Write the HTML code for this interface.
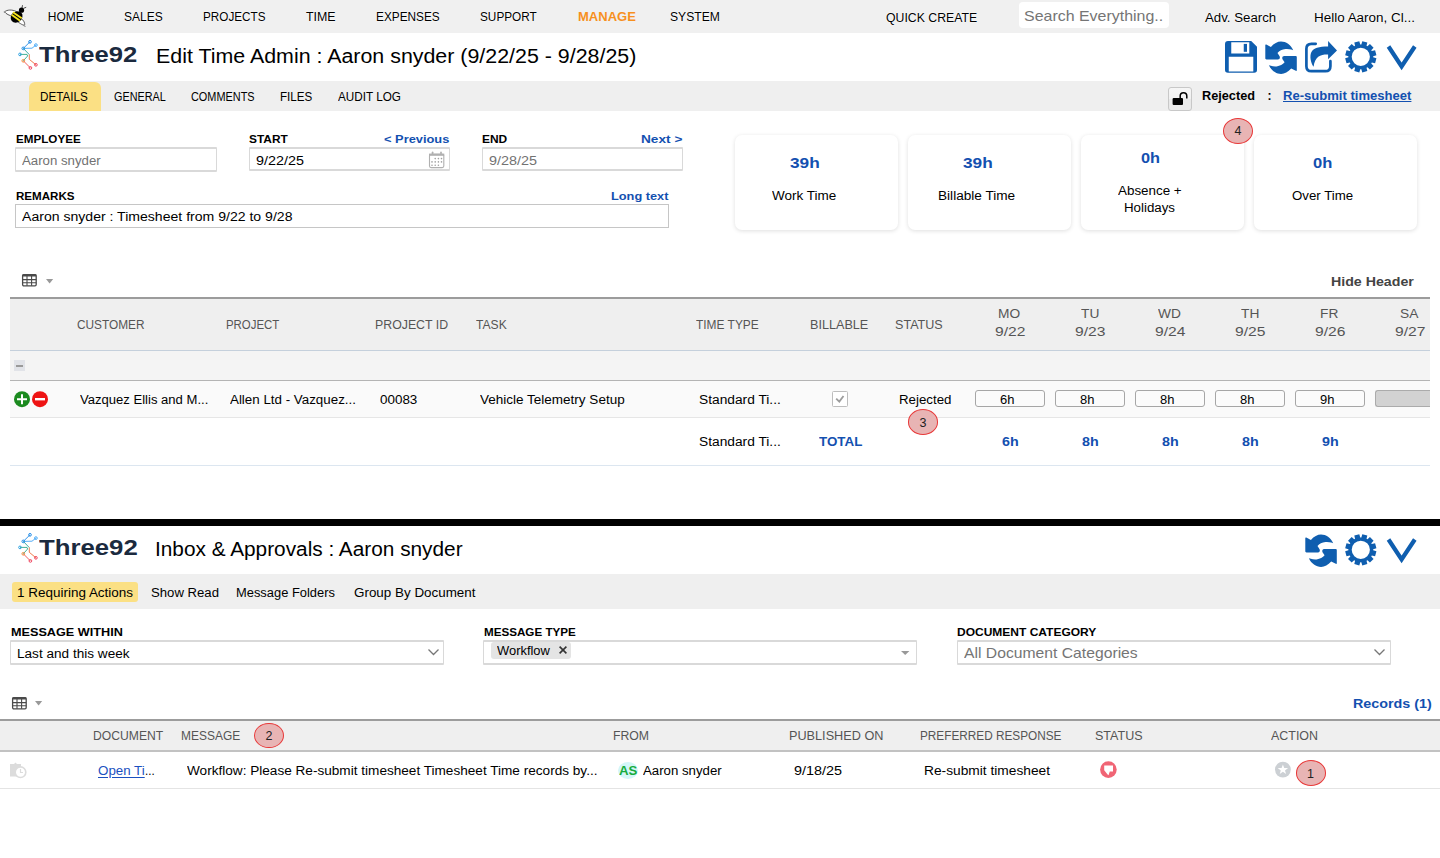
<!DOCTYPE html>
<html><head><meta charset="utf-8"><style>
html,body{margin:0;padding:0;}
body{width:1440px;height:858px;position:relative;overflow:hidden;background:#fff;font-family:"Liberation Sans", sans-serif;}
.t{position:absolute;white-space:pre;transform-origin:0 0;}
.b{position:absolute;box-sizing:border-box;}
svg{position:absolute;overflow:visible;}
</style></head><body>
<svg width="0" height="0" style="position:absolute">
<defs>
<path id="gear" fill-rule="evenodd" d="M11.00,-5.73 L14.29,-6.51 L15.63,-1.50 L12.39,-0.54 L12.39,0.54 L15.63,1.50 L14.29,6.51 L11.00,5.73 L10.46,6.66 L12.78,9.12 L9.12,12.78 L6.66,10.46 L5.73,11.00 L6.51,14.29 L1.50,15.63 L0.54,12.39 L-0.54,12.39 L-1.50,15.63 L-6.51,14.29 L-5.73,11.00 L-6.66,10.46 L-9.12,12.78 L-12.78,9.12 L-10.46,6.66 L-11.00,5.73 L-14.29,6.51 L-15.63,1.50 L-12.39,0.54 L-12.39,-0.54 L-15.63,-1.50 L-14.29,-6.51 L-11.00,-5.73 L-10.46,-6.66 L-12.78,-9.12 L-9.12,-12.78 L-6.66,-10.46 L-5.73,-11.00 L-6.51,-14.29 L-1.50,-15.63 L-0.54,-12.39 L0.54,-12.39 L1.50,-15.63 L6.51,-14.29 L5.73,-11.00 L6.66,-10.46 L9.12,-12.78 L12.78,-9.12 L10.46,-6.66 Z M9.1,0 A9.1,9.1 0 1,0 -9.1,0 A9.1,9.1 0 1,0 9.1,0 Z"/>
<g id="logo" fill="none" stroke-width="0.9">
  <path d="M23.3,48.4 L30,41.8" stroke="#1e88e5"/>
  <path d="M23.3,48.4 L32,48.2 L35.9,45.1" stroke="#42a5f5"/>
  <path d="M23.3,48.4 L29.3,54.6" stroke="#26a69a"/>
  <path d="M20,54.4 L27,54.4 L27.6,56 L23.3,60.8" stroke="#2eaa8a"/>
  <path d="M29.3,54.6 L29.3,59.3 L35.9,64.8" stroke="#ef6c3a"/>
  <path d="M23.3,60.8 L30.4,67.9" stroke="#ee4d4d"/>
  <circle cx="30" cy="41.8" r="1.35" stroke="#1e88e5" stroke-width="0.95"/>
  <circle cx="35.9" cy="45.1" r="1.35" stroke="#42a5f5" stroke-width="0.95"/>
  <circle cx="23.3" cy="48.4" r="1.35" stroke="#1e88e5" stroke-width="0.95"/>
  <circle cx="20" cy="54.4" r="1.35" stroke="#29a0e0" stroke-width="0.95"/>
  <circle cx="23.3" cy="60.8" r="1.35" stroke="#f08a3a" stroke-width="0.95"/>
  <circle cx="35.9" cy="64.8" r="1.35" stroke="#ee3e5a" stroke-width="0.95"/>
  <circle cx="30.4" cy="67.9" r="1.35" stroke="#ee3e5a" stroke-width="0.95"/>
</g>
<g id="refresh">
  <path id="rtop" d="M3.3,7.2 Q3.3,6.2 4.3,6.6 L8.9,8.9 C12,5.5 15.5,3.5 19,3.5 C24,3.5 28.8,6.8 31.2,12.2 L29.2,11.6 C27.5,11 25.5,10.8 23.5,11 C20,11.4 17.3,12.8 15.5,15.1 L17.6,18.2 C18.3,19.8 17.6,21.4 15.8,21.4 L4.5,21.4 C3.8,21.4 3.3,20.9 3.3,20.2 Z"/>
  <use href="#rtop" transform="rotate(180 19.05 19.7)"/>
</g>
<path id="chev" d="M2.5,2.5 L15.6,22.5 L28.8,2.5" fill="none" stroke-width="4.2" stroke-linejoin="miter"/>
<g id="gridico">
  <rect x="0.6" y="0.6" width="13.6" height="11.2" rx="1.2" fill="none" stroke="#4a4a4a" stroke-width="1.3"/>
  <rect x="0.6" y="0.3" width="13.6" height="2.2" fill="#4a4a4a"/>
  <path d="M0.6,5.6 H14.2 M0.6,8.8 H14.2 M5,1 V11.8 M9.6,1 V11.8" stroke="#4a4a4a" stroke-width="1.1"/>
</g>
<g id="chevsm"><path d="M0.5,0.5 L5.5,5.5 L10.5,0.5" fill="none" stroke="#777" stroke-width="1.3"/></g>
</defs>
</svg>

<!-- ===== top nav ===== -->
<div class="b" style="left:0;top:0;width:1440px;height:33px;background:#f0f0f0"></div>
<svg style="left:0;top:0" width="32" height="32">
    <path d="M4.6,11.9 C7,9.6 12,9.4 16.5,11.5 L13,16.5 C9.5,15.5 6,14 4.6,11.9 Z" fill="#fff" stroke="#333" stroke-width="0.8"/>
    <path d="M19,19 C22,18 24.5,21 24.8,24.6 C24,25.6 22,25 17.5,21.5 Z" fill="#fff" stroke="#333" stroke-width="0.8"/>
    <ellipse cx="16.6" cy="16.9" rx="6.3" ry="5.3" transform="rotate(-40 16.6 16.9)" fill="#000"/>
    <path d="M12.9,12.3 L21.7,18.3" stroke="#f6e41a" stroke-width="1.9"/>
    <path d="M11.7,14.8 L20,20.8" stroke="#f6e41a" stroke-width="1.9"/>
    <circle cx="21.5" cy="10.2" r="2.6" fill="#000"/>
    <path d="M22,8 L22.5,5.2 M23.4,8.4 L26.2,7.3" stroke="#222" stroke-width="0.8"/>
    <path d="M23.5,25.6 L25.5,26.4" stroke="#555" stroke-width="0.8"/>
    <circle cx="4.5" cy="12" r="0.8" fill="#888"/>
</svg>
<div class="b" style="left:1019px;top:2px;width:150px;height:25.5px;background:#fff;border-radius:4px"></div>

<!-- ===== header 1 ===== -->
<svg style="left:0;top:0" width="40" height="80"><use href="#logo"/></svg>
<svg style="left:1225px;top:41px" width="32" height="32" viewBox="0 0 32 32">
  <path fill="#0f5eaf" fill-rule="evenodd" d="M3,0 H26.2 L32,5.8 V29 Q32,31.8 29.2,31.8 H3 Q0,31.8 0,29 V3 Q0,0 3,0 Z M6.25,1.3 V12.5 H24.3 V1.3 Z M3.75,15.8 V30.6 H28.3 V15.8 Z"/>
  <rect x="18.75" y="2.9" width="3.25" height="7.9" fill="#0f5eaf"/>
</svg>
<svg style="left:1262px;top:38px" width="38" height="38" fill="#0f5eaf"><use href="#refresh"/></svg>
<svg style="left:1302px;top:38px" width="38" height="38">
  <path d="M13.7,5.8 L9.4,5.8 Q4.4,5.8 4.4,10.8 L4.4,28.2 Q4.4,33.2 9.4,33.2 L23.4,33.2 Q28.4,33.2 28.4,28.2 L28.4,23.2" fill="none" stroke="#0f5eaf" stroke-width="2.7" stroke-linecap="round"/>
  <path d="M26.1,3.1 L35,12.4 L26.1,21.3 L26.1,16.4 C19,16.2 12.8,18 11.6,28.8 C8.5,24.5 7.6,18 9.3,14.2 C11.5,9.8 17,8.4 26.1,8.4 Z" fill="#0f5eaf"/>
</svg>
<svg style="left:1342px;top:38px" width="38" height="38" fill="#0f5eaf"><use href="#gear" transform="translate(18.8,18.8)"/></svg>
<svg style="left:1385.5px;top:44px" width="32" height="26" stroke="#0f5eaf"><use href="#chev"/></svg>

<!-- ===== tabs 1 ===== -->
<div class="b" style="left:0;top:81px;width:1440px;height:30px;background:#efefef"></div>
<div class="b" style="left:29px;top:82px;width:71.5px;height:29px;background:#fbe084;border-radius:6px 6px 0 0"></div>
<div class="b" style="left:1168px;top:87px;width:24px;height:23.5px;border:1px solid #c8c8c8;border-radius:3px;background:linear-gradient(#f6f6f6 0%,#f1f1f1 50%,#e9e9e9 51%,#e9e9e9 100%)"></div>
<svg style="left:1164px;top:84px" width="32" height="30">
  <rect x="8.6" y="14" width="10.4" height="7" rx="1" fill="#000"/>
  <path d="M16.2,14.2 V12 A3.3,3.3 0 0 1 22.8,12 V14.6" fill="none" stroke="#000" stroke-width="1.5"/>
</svg>

<!-- ===== form ===== -->
<div class="b" style="left:15px;top:147px;width:201.5px;height:24.5px;border-style:solid;border-color:#d9d9d9;border-width:2px 1px;border-radius:1px;background:#fff"></div>
<div class="b" style="left:248.5px;top:147.3px;width:201px;height:24px;border-style:solid;border-color:#d9d9d9;border-width:2px 1px;border-radius:1px;background:#fff"></div>
<div class="b" style="left:481.8px;top:147.3px;width:201px;height:24px;border-style:solid;border-color:#d9d9d9;border-width:2px 1px;border-radius:1px;background:#fff"></div>
<div class="b" style="left:15px;top:204px;width:654px;height:24px;border:1px solid #c6c6c6;background:#fff"></div>
<svg style="left:424px;top:148px" width="26" height="24">
  <rect x="5.5" y="6.2" width="14.3" height="13.4" rx="1.6" fill="none" stroke="#b0b0b0" stroke-width="1.1"/>
  <rect x="5" y="5.6" width="15.3" height="2.2" fill="#b0b0b0"/>
  <rect x="7.8" y="3.5" width="1.6" height="3" rx="0.8" fill="#b0b0b0"/>
  <rect x="16.2" y="3.5" width="1.6" height="3" rx="0.8" fill="#b0b0b0"/>
  <g fill="#a0a0a0">
    <circle cx="11.2" cy="10.6" r="0.8"/><circle cx="14.4" cy="10.6" r="0.8"/><circle cx="17.5" cy="10.6" r="0.8"/>
    <circle cx="8" cy="13.9" r="0.8"/><circle cx="11.2" cy="13.9" r="0.8"/><circle cx="14.4" cy="13.9" r="0.8"/><circle cx="17.5" cy="13.9" r="0.8"/>
    <circle cx="8" cy="17.2" r="0.8"/><circle cx="11.2" cy="17.2" r="0.8"/><circle cx="14.4" cy="17.2" r="0.8"/>
  </g>
</svg>

<!-- ===== cards ===== -->
<div class="b" style="left:735px;top:134.5px;width:163px;height:95.6px;background:#fff;border-radius:7px;box-shadow:0 1px 4px rgba(0,0,0,0.13)"></div>
<div class="b" style="left:908px;top:134.5px;width:163px;height:95.6px;background:#fff;border-radius:7px;box-shadow:0 1px 4px rgba(0,0,0,0.13)"></div>
<div class="b" style="left:1081.3px;top:134.5px;width:163px;height:95.6px;background:#fff;border-radius:7px;box-shadow:0 1px 4px rgba(0,0,0,0.13)"></div>
<div class="b" style="left:1253.8px;top:134.5px;width:163px;height:95.6px;background:#fff;border-radius:7px;box-shadow:0 1px 4px rgba(0,0,0,0.13)"></div>
<div class="b" style="left:1223px;top:118px;width:30px;height:26px;background:#e8b4b4;border:1.2px solid #e83838;border-radius:50%"></div>

<!-- ===== grid toolbar 1 ===== -->
<svg style="left:21.6px;top:274px" width="16" height="13"><use href="#gridico"/></svg>
<svg style="left:45.5px;top:278.5px" width="8" height="5"><path d="M0,0 H7.2 L3.6,4.6 Z" fill="#999"/></svg>

<!-- ===== table 1 ===== -->
<div class="b" style="left:10px;top:297px;width:1420px;height:2px;background:#9c9c9c"></div>
<div class="b" style="left:10px;top:299px;width:1420px;height:51px;background:#efefef"></div>
<div class="b" style="left:10px;top:350px;width:1420px;height:1px;background:#c5d0dc"></div>
<div class="b" style="left:10px;top:351px;width:1420px;height:29px;background:#f4f4f4"></div>
<div class="b" style="left:10px;top:380px;width:1420px;height:1px;background:#b4b4b4"></div>
<div class="b" style="left:10px;top:381px;width:1420px;height:36px;background:#fafafa"></div>
<div class="b" style="left:10px;top:417px;width:1420px;height:1px;background:#e6e6e6"></div>
<div class="b" style="left:10px;top:465px;width:1420px;height:1px;background:#dce6f0"></div>
<div class="b" style="left:14px;top:360.4px;width:11px;height:11px;background:#e1e3e8"></div>
<div class="b" style="left:16px;top:365px;width:7px;height:2px;background:#9a9a9a"></div>
<svg style="left:0;top:380px" width="60" height="40">
  <circle cx="22" cy="19.2" r="8" fill="#1b8a1f"/>
  <path d="M22,14.2 V24.2 M17,19.2 H27" stroke="#fff" stroke-width="2"/>
  <circle cx="40" cy="19.2" r="8" fill="#ee1414"/>
  <path d="M35,19.2 H45" stroke="#fff" stroke-width="2.4"/>
</svg>
<div class="b" style="left:832.2px;top:391.3px;width:15.6px;height:15.3px;border:1px solid #bdbdbd;border-radius:1.5px;background:#fff"></div>
<svg style="left:826px;top:386px" width="28" height="26"><path d="M10.2,12.6 L13.3,15.6 L17.5,10" fill="none" stroke="#9c9c9c" stroke-width="1.8"/></svg>
<div class="b" style="left:975px;top:390.2px;width:70px;height:17.3px;border:1px solid #a6a6a6;border-radius:3px;background:#fbfbfb"></div>
<div class="b" style="left:1055px;top:390.2px;width:70px;height:17.3px;border:1px solid #a6a6a6;border-radius:3px;background:#fbfbfb"></div>
<div class="b" style="left:1135px;top:390.2px;width:70px;height:17.3px;border:1px solid #a6a6a6;border-radius:3px;background:#fbfbfb"></div>
<div class="b" style="left:1215px;top:390.2px;width:70px;height:17.3px;border:1px solid #a6a6a6;border-radius:3px;background:#fbfbfb"></div>
<div class="b" style="left:1295px;top:390.2px;width:70px;height:17.3px;border:1px solid #a6a6a6;border-radius:3px;background:#fbfbfb"></div>
<div class="b" style="left:1375px;top:390.2px;width:55px;height:17.3px;border:1px solid #ababab;border-right:none;border-radius:3px 0 0 3px;background:#d2d2d2"></div>
<div class="b" style="left:908px;top:409.2px;width:30px;height:25.4px;background:#e8b4b4;border:1.2px solid #e83838;border-radius:50%"></div>

<!-- ===== separator ===== -->
<div class="b" style="left:0;top:519px;width:1440px;height:7px;background:#000"></div>

<!-- ===== header 2 ===== -->
<svg style="left:0;top:493px" width="40" height="80"><use href="#logo"/></svg>
<svg style="left:1302px;top:531px" width="38" height="38" fill="#0f5eaf"><use href="#refresh"/></svg>
<svg style="left:1342px;top:531px" width="38" height="38" fill="#0f5eaf"><use href="#gear" transform="translate(18.8,18.8)"/></svg>
<svg style="left:1385.5px;top:537px" width="32" height="26" stroke="#0f5eaf"><use href="#chev"/></svg>

<!-- ===== tabs 2 ===== -->
<div class="b" style="left:0;top:573.5px;width:1440px;height:35px;background:#efefef"></div>
<div class="b" style="left:12.2px;top:582px;width:126.3px;height:20px;background:#fbe084;border-radius:3px"></div>

<!-- ===== filters ===== -->
<div class="b" style="left:10px;top:640px;width:434px;height:24.7px;border-style:solid;border-color:#d9d9d9;border-width:2px 1px;border-radius:1px;background:#fff"></div>
<svg style="left:427.5px;top:649px" width="12" height="7"><use href="#chevsm"/></svg>
<div class="b" style="left:483.3px;top:640px;width:434px;height:24.7px;border-style:solid;border-color:#d9d9d9;border-width:2px 1px;border-radius:1px;background:#fff"></div>
<div class="b" style="left:490.7px;top:642.3px;width:80.3px;height:16.7px;background:#e4e4e4;border-radius:3px"></div>
<svg style="left:558px;top:644.5px" width="11" height="11"><path d="M1.6,1.6 L8.4,8.4 M8.4,1.6 L1.6,8.4" stroke="#333" stroke-width="1.6"/></svg>
<svg style="left:901px;top:650.5px" width="9" height="5"><path d="M0,0 H8.4 L4.2,4 Z" fill="#999"/></svg>
<div class="b" style="left:956.7px;top:640px;width:434px;height:24.7px;border-style:solid;border-color:#d9d9d9;border-width:2px 1px;border-radius:1px;background:#fff"></div>
<svg style="left:1374px;top:648.5px" width="12" height="7"><use href="#chevsm"/></svg>

<!-- ===== grid toolbar 2 ===== -->
<svg style="left:11.5px;top:696.5px" width="16" height="13"><use href="#gridico"/></svg>
<svg style="left:35px;top:701px" width="8" height="5"><path d="M0,0 H7.2 L3.6,4.6 Z" fill="#999"/></svg>

<!-- ===== table 2 ===== -->
<div class="b" style="left:0;top:719px;width:1440px;height:2px;background:#9c9c9c"></div>
<div class="b" style="left:0;top:721px;width:1440px;height:29px;background:#efefef"></div>
<div class="b" style="left:0;top:750px;width:1440px;height:1.5px;background:#c2c2c2"></div>
<div class="b" style="left:0;top:788px;width:1440px;height:1px;background:#e4e4e4"></div>
<div class="b" style="left:254px;top:722.7px;width:30px;height:25.6px;background:#e8b4b4;border:1.2px solid #e83838;border-radius:50%"></div>
<svg style="left:4px;top:756px" width="30" height="28">
  <path d="M6,8 H10 L11.5,6.5 L13,8 H17 V20.5 H6 Z" fill="#dcdcdc"/>
  <circle cx="16.5" cy="16.2" r="5.3" fill="#fff" stroke="#dcdcdc" stroke-width="1.6"/>
  <path d="M16.5,13 V16.5 H19" fill="none" stroke="#dcdcdc" stroke-width="1.2"/>
</svg>
<div class="b" style="left:617.9px;top:761.6px;width:20px;height:17px;background:#d4f6f8;border-radius:50%"></div>
<svg style="left:1094px;top:756px" width="30" height="28">
  <circle cx="14.4" cy="13.6" r="8.3" fill="#f06575"/>
  <path d="M10.2,9.6 H19 V15.5 H15.8 L14.5,19.2 L13.6,18.6 L10.2,14.2 Z" fill="#fff"/>
</svg>
<svg style="left:1268px;top:754px" width="30" height="30">
  <circle cx="14.9" cy="15.6" r="7.9" fill="#ccd0d4"/>
  <path d="M14.9,10.4 L16.2,14.1 L20.1,14.1 L17,16.4 L18.1,20.1 L14.9,17.8 L11.7,20.1 L12.8,16.4 L9.7,14.1 L13.6,14.1 Z" fill="#fff"/>
</svg>
<div class="b" style="left:1296px;top:760.2px;width:30px;height:25.4px;background:#e8b4b4;border:1.2px solid #e83838;border-radius:50%"></div>

<span class="t" style="left:47.80px;top:10.80px;font-size:12px;line-height:12px;font-weight:400;color:#000;text-shadow:0 0 1.5px #fff,0 0 1.5px #fff;">HOME</span>
<span class="t" style="left:124.00px;top:10.80px;font-size:12px;line-height:12px;font-weight:400;color:#000;text-shadow:0 0 1.5px #fff,0 0 1.5px #fff;">SALES</span>
<span class="t" style="left:203.02px;top:10.80px;font-size:12px;line-height:12px;font-weight:400;color:#000;transform:scaleX(0.9762);text-shadow:0 0 1.5px #fff,0 0 1.5px #fff;">PROJECTS</span>
<span class="t" style="left:306.00px;top:10.80px;font-size:12px;line-height:12px;font-weight:400;color:#000;transform:scaleX(1.0345);text-shadow:0 0 1.5px #fff,0 0 1.5px #fff;">TIME</span>
<span class="t" style="left:376.02px;top:10.80px;font-size:12px;line-height:12px;font-weight:400;color:#000;transform:scaleX(0.9844);text-shadow:0 0 1.5px #fff,0 0 1.5px #fff;">EXPENSES</span>
<span class="t" style="left:480.02px;top:10.80px;font-size:12px;line-height:12px;font-weight:400;color:#000;transform:scaleX(0.9825);text-shadow:0 0 1.5px #fff,0 0 1.5px #fff;">SUPPORT</span>
<span class="t" style="left:578.00px;top:10.80px;font-size:12px;line-height:12px;font-weight:700;color:#f7901e;transform:scaleX(1.0849);">MANAGE</span>
<span class="t" style="left:669.99px;top:10.80px;font-size:12px;line-height:12px;font-weight:400;color:#000;transform:scaleX(1.0104);text-shadow:0 0 1.5px #fff,0 0 1.5px #fff;">SYSTEM</span>
<span class="t" style="left:886.00px;top:11.70px;font-size:12px;line-height:12px;font-weight:400;color:#000;transform:scaleX(1.0225);text-shadow:0 0 1.5px #fff,0 0 1.5px #fff;">QUICK CREATE</span>
<span class="t" style="left:1024.40px;top:8.50px;font-size:14.5px;line-height:14.5px;font-weight:400;color:#757575;transform:scaleX(1.1000);">Search Everything..</span>
<span class="t" style="left:1205.00px;top:12.20px;font-size:12.5px;line-height:12.5px;font-weight:400;color:#000;transform:scaleX(1.0597);text-shadow:0 0 1.5px #fff,0 0 1.5px #fff;">Adv. Search</span>
<span class="t" style="left:1314.32px;top:12.20px;font-size:12.5px;line-height:12.5px;font-weight:400;color:#000;transform:scaleX(1.0761);text-shadow:0 0 1.5px #fff,0 0 1.5px #fff;">Hello Aaron, Cl...</span>
<span class="t" style="left:39.00px;top:44.00px;font-size:22.6px;line-height:22.6px;font-weight:700;color:#1b2a3e;transform:scaleX(1.1337);">Three92</span>
<span class="t" style="left:156.23px;top:45.80px;font-size:20px;line-height:20px;font-weight:400;color:#000;transform:scaleX(1.0694);">Edit Time Admin : Aaron snyder (9/22/25 - 9/28/25)</span>
<span class="t" style="left:40.43px;top:91.00px;font-size:12px;line-height:12px;font-weight:400;color:#000;transform:scaleX(0.9708);">DETAILS</span>
<span class="t" style="left:114.40px;top:91.00px;font-size:12px;line-height:12px;font-weight:400;color:#000;transform:scaleX(0.9018);">GENERAL</span>
<span class="t" style="left:191.40px;top:91.00px;font-size:12px;line-height:12px;font-weight:400;color:#000;transform:scaleX(0.9086);">COMMENTS</span>
<span class="t" style="left:280.03px;top:91.00px;font-size:12px;line-height:12px;font-weight:400;color:#000;transform:scaleX(0.9688);">FILES</span>
<span class="t" style="left:338.00px;top:91.00px;font-size:12px;line-height:12px;font-weight:400;color:#000;transform:scaleX(0.9766);">AUDIT LOG</span>
<span class="t" style="left:1202.40px;top:89.60px;font-size:12px;line-height:12px;font-weight:700;color:#000;transform:scaleX(1.0600);">Rejected</span>
<span class="t" style="left:1267.50px;top:89.60px;font-size:12px;line-height:12px;font-weight:700;color:#000;">:</span>
<span class="t" style="left:1282.60px;top:89.60px;font-size:12px;line-height:12px;font-weight:700;color:#1350b0;transform:scaleX(1.0881);text-decoration:underline;text-underline-offset:1px;">Re-submit timesheet</span>
<span class="t" style="left:15.60px;top:134.00px;font-size:11px;line-height:11px;font-weight:700;color:#000;transform:scaleX(1.0590);">EMPLOYEE</span>
<span class="t" style="left:248.90px;top:134.00px;font-size:11px;line-height:11px;font-weight:700;color:#000;transform:scaleX(1.0806);">START</span>
<span class="t" style="left:383.60px;top:134.00px;font-size:11px;line-height:11px;font-weight:700;color:#1350b0;transform:scaleX(1.1679);">&lt; Previous</span>
<span class="t" style="left:482.20px;top:134.00px;font-size:11px;line-height:11px;font-weight:700;color:#000;transform:scaleX(1.0870);">END</span>
<span class="t" style="left:641.10px;top:134.00px;font-size:11px;line-height:11px;font-weight:700;color:#1350b0;transform:scaleX(1.2424);">Next &gt;</span>
<span class="t" style="left:15.60px;top:190.80px;font-size:11px;line-height:11px;font-weight:700;color:#000;transform:scaleX(1.0536);">REMARKS</span>
<span class="t" style="left:610.80px;top:190.80px;font-size:11px;line-height:11px;font-weight:700;color:#1350b0;transform:scaleX(1.1600);">Long text</span>
<span class="t" style="left:22.20px;top:154.80px;font-size:12.5px;line-height:12.5px;font-weight:400;color:#727272;transform:scaleX(1.0587);">Aaron snyder</span>
<span class="t" style="left:255.70px;top:155.00px;font-size:12.5px;line-height:12.5px;font-weight:400;color:#000;transform:scaleX(1.1476);">9/22/25</span>
<span class="t" style="left:488.80px;top:155.00px;font-size:12.5px;line-height:12.5px;font-weight:400;color:#727272;transform:scaleX(1.1524);">9/28/25</span>
<span class="t" style="left:22.20px;top:211.00px;font-size:12.5px;line-height:12.5px;font-weight:400;color:#000;transform:scaleX(1.1250);">Aaron snyder : Timesheet from 9/22 to 9/28</span>
<span class="t" style="left:789.50px;top:155.00px;font-size:15px;line-height:15px;font-weight:700;color:#1350b0;transform:scaleX(1.1500);">39h</span>
<span class="t" style="left:772.00px;top:189.50px;font-size:12.5px;line-height:12.5px;font-weight:400;color:#000;transform:scaleX(1.0805);">Work Time</span>
<span class="t" style="left:962.50px;top:155.00px;font-size:15px;line-height:15px;font-weight:700;color:#1350b0;transform:scaleX(1.1500);">39h</span>
<span class="t" style="left:937.66px;top:189.50px;font-size:12.5px;line-height:12.5px;font-weight:400;color:#000;transform:scaleX(1.0893);">Billable Time</span>
<span class="t" style="left:1140.50px;top:150.00px;font-size:15px;line-height:15px;font-weight:700;color:#1350b0;transform:scaleX(1.0882);">0h</span>
<span class="t" style="left:1118.00px;top:185.00px;font-size:12.5px;line-height:12.5px;font-weight:400;color:#000;transform:scaleX(1.0720);">Absence +</span>
<span class="t" style="left:1123.94px;top:201.50px;font-size:12.5px;line-height:12.5px;font-weight:400;color:#000;transform:scaleX(1.0638);">Holidays</span>
<span class="t" style="left:1313.00px;top:155.00px;font-size:15px;line-height:15px;font-weight:700;color:#1350b0;transform:scaleX(1.1029);">0h</span>
<span class="t" style="left:1291.75px;top:189.50px;font-size:12.5px;line-height:12.5px;font-weight:400;color:#000;transform:scaleX(1.0603);">Over Time</span>
<span class="t" style="left:1234.50px;top:125.00px;font-size:12.5px;line-height:12.5px;font-weight:400;color:#222;">4</span>
<span class="t" style="left:1330.70px;top:276.00px;font-size:12px;line-height:12px;font-weight:700;color:#444;transform:scaleX(1.1829);">Hide Header</span>
<span class="t" style="left:76.50px;top:319.30px;font-size:12.5px;line-height:12.5px;font-weight:400;color:#555;transform:scaleX(0.9472);">CUSTOMER</span>
<span class="t" style="left:225.59px;top:319.30px;font-size:12.5px;line-height:12.5px;font-weight:400;color:#555;transform:scaleX(0.9138);">PROJECT</span>
<span class="t" style="left:375.26px;top:319.30px;font-size:12.5px;line-height:12.5px;font-weight:400;color:#555;transform:scaleX(0.9863);">PROJECT ID</span>
<span class="t" style="left:476.25px;top:319.30px;font-size:12.5px;line-height:12.5px;font-weight:400;color:#555;transform:scaleX(0.9688);">TASK</span>
<span class="t" style="left:696.25px;top:319.30px;font-size:12.5px;line-height:12.5px;font-weight:400;color:#555;transform:scaleX(0.9545);">TIME TYPE</span>
<span class="t" style="left:810.49px;top:319.30px;font-size:12.5px;line-height:12.5px;font-weight:400;color:#555;transform:scaleX(1.0107);">BILLABLE</span>
<span class="t" style="left:895.24px;top:319.30px;font-size:12.5px;line-height:12.5px;font-weight:400;color:#555;transform:scaleX(1.0054);">STATUS</span>
<span class="t" style="left:998.05px;top:307.90px;font-size:12.5px;line-height:12.5px;font-weight:400;color:#555;transform:scaleX(1.1000);">MO</span>
<span class="t" style="left:994.50px;top:325.90px;font-size:12.5px;line-height:12.5px;font-weight:400;color:#555;transform:scaleX(1.2500);">9/22</span>
<span class="t" style="left:1080.80px;top:307.90px;font-size:12.5px;line-height:12.5px;font-weight:400;color:#555;transform:scaleX(1.1000);">TU</span>
<span class="t" style="left:1074.50px;top:325.90px;font-size:12.5px;line-height:12.5px;font-weight:400;color:#555;transform:scaleX(1.2500);">9/23</span>
<span class="t" style="left:1158.05px;top:307.90px;font-size:12.5px;line-height:12.5px;font-weight:400;color:#555;transform:scaleX(1.1000);">WD</span>
<span class="t" style="left:1154.50px;top:325.90px;font-size:12.5px;line-height:12.5px;font-weight:400;color:#555;transform:scaleX(1.2500);">9/24</span>
<span class="t" style="left:1240.80px;top:307.90px;font-size:12.5px;line-height:12.5px;font-weight:400;color:#555;transform:scaleX(1.1000);">TH</span>
<span class="t" style="left:1234.50px;top:325.90px;font-size:12.5px;line-height:12.5px;font-weight:400;color:#555;transform:scaleX(1.2500);">9/25</span>
<span class="t" style="left:1320.25px;top:307.90px;font-size:12.5px;line-height:12.5px;font-weight:400;color:#555;transform:scaleX(1.1000);">FR</span>
<span class="t" style="left:1314.50px;top:325.90px;font-size:12.5px;line-height:12.5px;font-weight:400;color:#555;transform:scaleX(1.2500);">9/26</span>
<span class="t" style="left:1399.70px;top:307.90px;font-size:12.5px;line-height:12.5px;font-weight:400;color:#555;transform:scaleX(1.1000);">SA</span>
<span class="t" style="left:1394.50px;top:325.90px;font-size:12.5px;line-height:12.5px;font-weight:400;color:#555;transform:scaleX(1.2500);">9/27</span>
<span class="t" style="left:80.20px;top:394.00px;font-size:12.5px;line-height:12.5px;font-weight:400;color:#000;transform:scaleX(1.0451);">Vazquez Ellis and M...</span>
<span class="t" style="left:230.40px;top:394.00px;font-size:12.5px;line-height:12.5px;font-weight:400;color:#000;transform:scaleX(1.0684);">Allen Ltd - Vazquez...</span>
<span class="t" style="left:380.40px;top:394.00px;font-size:12.5px;line-height:12.5px;font-weight:400;color:#000;transform:scaleX(1.0743);">00083</span>
<span class="t" style="left:480.40px;top:394.00px;font-size:12.5px;line-height:12.5px;font-weight:400;color:#000;transform:scaleX(1.0806);">Vehicle Telemetry Setup</span>
<span class="t" style="left:699.30px;top:394.00px;font-size:12.5px;line-height:12.5px;font-weight:400;color:#000;transform:scaleX(1.1000);">Standard Ti...</span>
<span class="t" style="left:899.34px;top:394.00px;font-size:12.5px;line-height:12.5px;font-weight:400;color:#000;transform:scaleX(1.0625);">Rejected</span>
<span class="t" style="left:999.95px;top:394.20px;font-size:12.5px;line-height:12.5px;font-weight:400;color:#000;transform:scaleX(1.0357);">6h</span>
<span class="t" style="left:1079.95px;top:394.20px;font-size:12.5px;line-height:12.5px;font-weight:400;color:#000;transform:scaleX(1.0357);">8h</span>
<span class="t" style="left:1159.95px;top:394.20px;font-size:12.5px;line-height:12.5px;font-weight:400;color:#000;transform:scaleX(1.0357);">8h</span>
<span class="t" style="left:1239.95px;top:394.20px;font-size:12.5px;line-height:12.5px;font-weight:400;color:#000;transform:scaleX(1.0357);">8h</span>
<span class="t" style="left:1319.95px;top:394.20px;font-size:12.5px;line-height:12.5px;font-weight:400;color:#000;transform:scaleX(1.0357);">9h</span>
<span class="t" style="left:919.50px;top:417.00px;font-size:12.5px;line-height:12.5px;font-weight:400;color:#222;">3</span>
<span class="t" style="left:699.30px;top:436.00px;font-size:12.5px;line-height:12.5px;font-weight:400;color:#000;transform:scaleX(1.1000);">Standard Ti...</span>
<span class="t" style="left:818.75px;top:436.00px;font-size:12.5px;line-height:12.5px;font-weight:700;color:#1350b0;transform:scaleX(1.0688);">TOTAL</span>
<span class="t" style="left:1002.10px;top:436.30px;font-size:12.5px;line-height:12.5px;font-weight:700;color:#1350b0;transform:scaleX(1.1429);">6h</span>
<span class="t" style="left:1082.10px;top:436.30px;font-size:12.5px;line-height:12.5px;font-weight:700;color:#1350b0;transform:scaleX(1.1429);">8h</span>
<span class="t" style="left:1162.10px;top:436.30px;font-size:12.5px;line-height:12.5px;font-weight:700;color:#1350b0;transform:scaleX(1.1429);">8h</span>
<span class="t" style="left:1242.10px;top:436.30px;font-size:12.5px;line-height:12.5px;font-weight:700;color:#1350b0;transform:scaleX(1.1429);">8h</span>
<span class="t" style="left:1322.10px;top:436.30px;font-size:12.5px;line-height:12.5px;font-weight:700;color:#1350b0;transform:scaleX(1.1429);">9h</span>
<span class="t" style="left:39.00px;top:537.00px;font-size:22.6px;line-height:22.6px;font-weight:700;color:#1b2a3e;transform:scaleX(1.1395);">Three92</span>
<span class="t" style="left:154.62px;top:538.70px;font-size:20px;line-height:20px;font-weight:400;color:#000;transform:scaleX(1.0401);">Inbox &amp; Approvals : Aaron snyder</span>
<span class="t" style="left:16.92px;top:586.80px;font-size:12.5px;line-height:12.5px;font-weight:400;color:#000;transform:scaleX(1.0776);">1 Requiring Actions</span>
<span class="t" style="left:150.95px;top:586.80px;font-size:12.5px;line-height:12.5px;font-weight:400;color:#000;transform:scaleX(1.0516);">Show Read</span>
<span class="t" style="left:236.47px;top:586.80px;font-size:12.5px;line-height:12.5px;font-weight:400;color:#000;transform:scaleX(1.0316);">Message Folders</span>
<span class="t" style="left:354.25px;top:586.80px;font-size:12.5px;line-height:12.5px;font-weight:400;color:#000;transform:scaleX(1.0730);">Group By Document</span>
<span class="t" style="left:10.70px;top:627.00px;font-size:11px;line-height:11px;font-weight:700;color:#000;transform:scaleX(1.1505);">MESSAGE WITHIN</span>
<span class="t" style="left:484.00px;top:627.00px;font-size:11px;line-height:11px;font-weight:700;color:#000;transform:scaleX(1.0575);">MESSAGE TYPE</span>
<span class="t" style="left:957.40px;top:627.00px;font-size:11px;line-height:11px;font-weight:700;color:#000;transform:scaleX(1.0906);">DOCUMENT CATEGORY</span>
<span class="t" style="left:16.91px;top:647.80px;font-size:12.5px;line-height:12.5px;font-weight:400;color:#000;transform:scaleX(1.0874);">Last and this week</span>
<span class="t" style="left:497.30px;top:645.20px;font-size:12.5px;line-height:12.5px;font-weight:400;color:#000;transform:scaleX(1.0327);">Workflow</span>
<span class="t" style="left:963.60px;top:645.60px;font-size:14.5px;line-height:14.5px;font-weight:400;color:#757575;transform:scaleX(1.0831);">All Document Categories</span>
<span class="t" style="left:1352.50px;top:698.40px;font-size:12px;line-height:12px;font-weight:700;color:#1350b0;transform:scaleX(1.1939);">Records (1)</span>
<span class="t" style="left:93.33px;top:730.20px;font-size:12.5px;line-height:12.5px;font-weight:400;color:#555;transform:scaleX(0.9718);">DOCUMENT</span>
<span class="t" style="left:181.34px;top:730.20px;font-size:12.5px;line-height:12.5px;font-weight:400;color:#555;transform:scaleX(0.9574);">MESSAGE</span>
<span class="t" style="left:613.02px;top:730.20px;font-size:12.5px;line-height:12.5px;font-weight:400;color:#555;transform:scaleX(0.9800);">FROM</span>
<span class="t" style="left:788.99px;top:730.20px;font-size:12.5px;line-height:12.5px;font-weight:400;color:#555;transform:scaleX(1.0143);">PUBLISHED ON</span>
<span class="t" style="left:920.06px;top:730.20px;font-size:12.5px;line-height:12.5px;font-weight:400;color:#555;transform:scaleX(0.9430);">PREFERRED RESPONSE</span>
<span class="t" style="left:1095.25px;top:730.20px;font-size:12.5px;line-height:12.5px;font-weight:400;color:#555;transform:scaleX(1.0043);">STATUS</span>
<span class="t" style="left:1271.00px;top:730.20px;font-size:12.5px;line-height:12.5px;font-weight:400;color:#555;transform:scaleX(0.9957);">ACTION</span>
<span class="t" style="left:265.50px;top:730.00px;font-size:12.5px;line-height:12.5px;font-weight:400;color:#222;">2</span>
<span class="t" style="left:98.30px;top:765.00px;font-size:12.5px;line-height:12.5px;font-weight:400;color:#1a50c0;transform:scaleX(1.0674);text-decoration:underline;text-underline-offset:1.5px;">Open Ti</span>
<span class="t" style="left:144.68px;top:765.00px;font-size:12.5px;line-height:12.5px;font-weight:400;color:#000;transform:scaleX(0.9222);">...</span>
<span class="t" style="left:186.70px;top:765.20px;font-size:12.5px;line-height:12.5px;font-weight:400;color:#000;transform:scaleX(1.0875);">Workflow: Please Re-submit timesheet Timesheet Time records by...</span>
<span class="t" style="left:619.00px;top:764.80px;font-size:12.5px;line-height:12.5px;font-weight:700;color:#17ab3c;transform:scaleX(1.0588);">AS</span>
<span class="t" style="left:643.30px;top:765.20px;font-size:12.5px;line-height:12.5px;font-weight:400;color:#000;transform:scaleX(1.0587);">Aaron snyder</span>
<span class="t" style="left:794.30px;top:765.20px;font-size:12.5px;line-height:12.5px;font-weight:400;color:#000;transform:scaleX(1.1524);">9/18/25</span>
<span class="t" style="left:923.90px;top:765.20px;font-size:12.5px;line-height:12.5px;font-weight:400;color:#000;transform:scaleX(1.1000);">Re-submit timesheet</span>
<span class="t" style="left:1307.00px;top:767.50px;font-size:12.5px;line-height:12.5px;font-weight:400;color:#222;">1</span>
</body></html>
